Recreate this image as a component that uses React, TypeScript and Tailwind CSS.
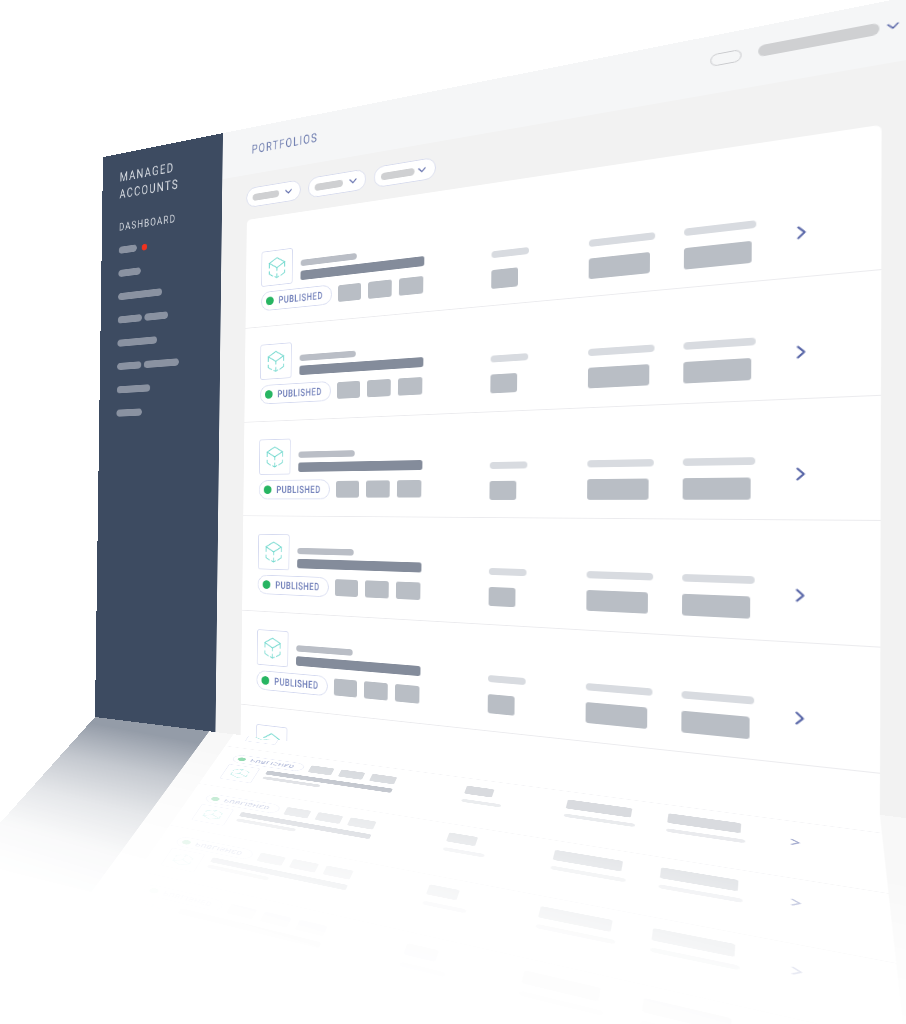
import { ChevronDown, ChevronRight } from 'lucide-react'

type Pt = [number, number]

// maps a w x h box onto a screen quad (tl, tr, br, bl)
function quadMatrix(w: number, h: number, q: Pt[]): string {
  const [[x0, y0], [x1, y1], [x2, y2], [x3, y3]] = q
  const dx1 = x1 - x2, dx2 = x3 - x2, sx = x0 - x1 + x2 - x3
  const dy1 = y1 - y2, dy2 = y3 - y2, sy = y0 - y1 + y2 - y3
  const den = dx1 * dy2 - dx2 * dy1
  const g = (sx * dy2 - dx2 * sy) / den
  const k = (dx1 * sy - sx * dy1) / den
  const a = x1 - x0 + g * x1, b = x3 - x0 + k * x3
  const d = y1 - y0 + g * y1, e = y3 - y0 + k * y3
  return `matrix3d(${a / w},${d / w},0,${g / w},${b / h},${e / h},0,${k / h},0,0,1,0,${x0},${y0},0,1)`
}

const WINDOW_QUAD: Pt[] = [[103, 157], [882, 2], [880, 815], [95, 717]]
const FLOOR_QUAD: Pt[] = [[95, 717], [880, 815], [911, 1095], [-34, 861]]

const navBars = [
  [30], [37], [72], [40, 38], [65], [40, 56], [55], [42],
]

function CubeIcon() {
  return (
    <svg viewBox="0 0 24 28" className="w-[26px] h-[30px]" fill="none" stroke="#6fd8cd" strokeWidth="1.1">
      <path d="M12 2 L22 8 L12 14 L2 8 Z" />
      <path d="M2 8 V14 M2 17.500 V21 L7 24 M22 8 V14 M22 17.500 V21 L17 24 M12 14 V18 M12 21 V26 M9 24.500 L12 26.300 L15 24.500" />
    </svg>
  )
}

function Row({ first }: { first?: boolean }) {
  return (
    <div className={`flex shrink-0 border-b border-[#ebebee] pl-[22px] ${first ? 'h-[144px] pt-[45px]' : 'h-[123.5px] pt-[23px]'}`}>
      <div className="w-[294px] shrink-0">
        <div className="flex">
          <div className="w-[44px] h-[46px] border border-[#d5daf0] rounded-[3px] flex items-center justify-center">
            <CubeIcon />
          </div>
          <div className="ml-[11px] pt-[17px]">
            <div className="w-[75px] h-[8px] rounded-full bg-[#babec6]" />
            <div className="w-[160px] h-[12px] rounded-[3px] bg-[#848c9b] mt-[6px]" />
          </div>
        </div>
        <div className="flex items-center mt-[7px]">
          <div className="w-[98px] h-[25px] shrink-0 rounded-full border border-[#d5daf0] flex items-center pl-[6px]">
            <span className="w-[11px] h-[11px] shrink-0 rounded-full bg-[#27b562]" />
            <span className="ml-[7px] text-[13px] tracking-[0.8px] font-medium text-[#6e7db8] leading-none whitespace-nowrap scale-x-[0.8] origin-left">PUBLISHED</span>
          </div>
          <div className="flex gap-[9px] ml-[8px]">
            <div className="w-[30px] h-[21px] rounded-[3px] bg-[#b9bec5]" />
            <div className="w-[30px] h-[21px] rounded-[3px] bg-[#b9bec5]" />
            <div className="w-[30px] h-[21px] rounded-[3px] bg-[#b9bec5]" />
          </div>
        </div>
      </div>
      <div className="w-[106px] shrink-0 pt-[35px]">
        <div className="w-[42px] h-[8px] rounded-full bg-[#d8dbe0]" />
        <div className="w-[30px] h-[22px] rounded-[3px] bg-[#b9bec5] mt-[14px]" />
      </div>
      <div className="w-[95px] shrink-0 pt-[35px]">
        <div className="w-[67px] h-[8px] rounded-full bg-[#d8dbe0]" />
        <div className="w-[62px] h-[23px] rounded-[3px] bg-[#b9bec5] mt-[13px]" />
      </div>
      <div className="w-[96px] shrink-0 pt-[35px]">
        <div className="w-[67px] h-[8px] rounded-full bg-[#d8dbe0]" />
        <div className="w-[63px] h-[23px] rounded-[3px] bg-[#b9bec5] mt-[13px]" />
      </div>
      <ChevronRight className="w-[22px] h-[22px] mt-[42px] text-[#5563a6] shrink-0" strokeWidth={2} />
    </div>
  )
}

function FilterPill({ bar }: { bar: number }) {
  return (
    <div className="w-[77px] h-[26px] rounded-full bg-white border border-[#d8dcee] flex items-center justify-between pl-[8px] pr-[8px]">
      <div className="h-[9px] rounded-full bg-[#cfd0d2]" style={{ width: bar }} />
      <ChevronDown className="w-[16px] h-[16px] text-[#5563a6]" strokeWidth={2} />
    </div>
  )
}

// the upper part of the window never shows in the reflection, so it is left out there
function WindowPlane({ reflected }: { reflected?: boolean }) {
  return (
    <div className="flex w-[1000px] h-[800px] shrink-0 overflow-hidden font-['Roboto',sans-serif]">
      <aside className="w-[192px] shrink-0 bg-[#3d4b61] pl-[29px] pt-[22px]">
        {!reflected && (
          <>
            <div className="text-[#d9dde3] text-[18px] leading-[24px] tracking-[2.4px] scale-x-[0.86] origin-left">
              MANAGED<br />ACCOUNTS
            </div>
            <div className="text-[#d9dde3] text-[15px] leading-[16px] tracking-[2px] mt-[27px] scale-x-[0.88] origin-left">DASHBOARD</div>
            <div className="flex flex-col gap-[23px] mt-[20px]">
              {navBars.map((bars, i) => (
                <div key={i} className="flex items-center gap-[4px] h-[10px]">
                  {bars.map((w, j) => (
                    <div key={j} className="h-[10px] rounded-full bg-[#8a92a1]" style={{ width: w }} />
                  ))}
                  {i === 0 && <span className="w-[9px] h-[9px] rounded-full bg-[#f0321e] ml-[4px]" />}
                </div>
              ))}
            </div>
          </>
        )}
      </aside>
      <main className="flex-1 bg-[#f2f2f2] flex flex-col">
        <header className="h-[62px] shrink-0 bg-[#f5f6f7] flex items-center pl-[43px]">
          {!reflected && (
            <>
              <span className="text-[16px] tracking-[2px] text-[#6a79ad] w-[93px] mb-[3px] whitespace-nowrap scale-x-[0.82] origin-left">PORTFOLIOS</span>
              <div className="flex items-center ml-[442px] mb-[10px]">
                <div className="w-[29px] h-[13px] rounded-full border border-[#c9cacd]" />
                <div className="w-[104px] h-[12px] rounded-full bg-[#cfd0d2] ml-[15px]" />
                <ChevronDown className="w-[16px] h-[16px] text-[#5563a6] ml-[3px]" strokeWidth={2} />
              </div>
            </>
          )}
        </header>
        <div className="h-[60px] shrink-0 flex gap-[10px] pl-[36px] pt-[18px]">
          {!reflected && (
            <>
              <FilterPill bar={38} />
              <FilterPill bar={38} />
              <FilterPill bar={42} />
            </>
          )}
        </div>
        <div className="w-[691px] ml-[37px] rounded-t-[6px] bg-white flex flex-col shrink-0">
          {reflected ? <div className="h-[144px] shrink-0" /> : <Row first />}
          <Row />
          <Row />
          <Row />
          <Row />
          <Row />
        </div>
      </main>
    </div>
  )
}

export default function App() {
  return (
    <div className="relative w-[906px] h-[1024px] overflow-hidden bg-white">
      <div
        className="absolute left-0 top-0 origin-top-left"
        style={{ transform: quadMatrix(920, 800, WINDOW_QUAD) }}
      >
        <WindowPlane />
      </div>
      {/* floor reflection */}
      <div
        className="absolute left-0 top-0 w-[1000px] h-[480px] overflow-hidden origin-top-left [mask-image:linear-gradient(186deg,rgba(0,0,0,0.55),rgba(0,0,0,0.55)_22%,rgba(0,0,0,0.3)_42%,rgba(0,0,0,0.13)_62%,rgba(0,0,0,0.03)_80%,transparent)]"
        style={{ transform: quadMatrix(920, 480, FLOOR_QUAD) }}
      >
        <div className="flex flex-col justify-end h-full -scale-y-100">
          <WindowPlane reflected />
        </div>
      </div>
    </div>
  )
}
